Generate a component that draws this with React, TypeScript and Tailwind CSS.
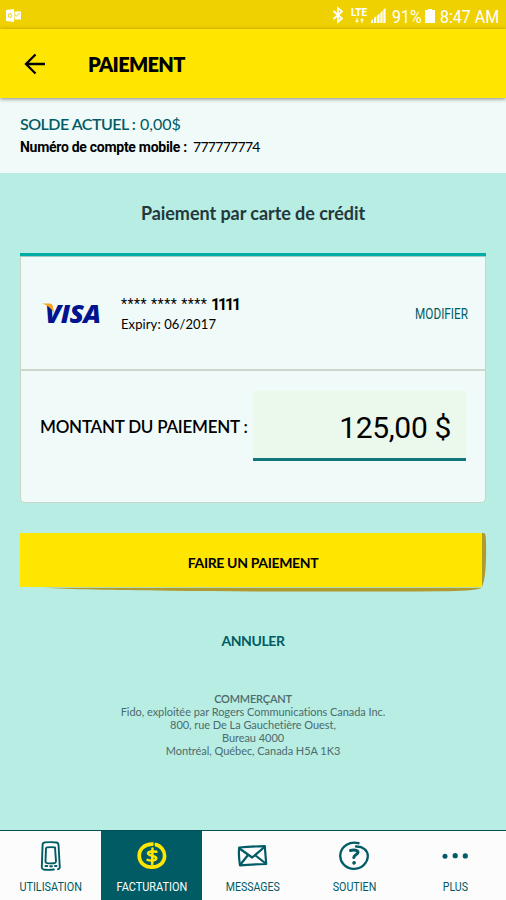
import type { ReactNode } from 'react';

type Tab = {
  label: string;
  labelClass: string;
  icon: ReactNode;
  active?: boolean;
};

function BluetoothIcon() {
  return (
    <svg className="h-[18px] w-[12px]" viewBox="0 0 12 18" fill="none" stroke="currentColor" strokeWidth="1.7">
      <path d="M1.5 5 10 12.5 6 16V2l4 3.5L1.5 13" />
    </svg>
  );
}

function SignalIcon() {
  return (
    <svg className="h-[15px] w-[15px]" viewBox="0 0 15 15" fill="currentColor">
      <path d="M0 15v-2l2-2v4zM3 15v-5l2.300-2v7zM6.200 15V7.500l2.300-2V15zM9.300 15V4.800l2.300-2V15zM12.300 15V1.800l2.300-1.800v15z" />
    </svg>
  );
}

function StatusBar() {
  return (
    <div className="flex h-[29px] items-start bg-[#efd101] text-white">
      <svg className="mt-[9px] ml-[6px] h-[13px] w-[15px]" viewBox="0 0 15 13">
        <path d="M0 1 8 0v13l-8-1z" fill="#fff" />
        <path d="M8.500 2.500H15v8H8.500z" fill="#fff" />
        <ellipse cx="3.900" cy="6.500" rx="1.500" ry="2" fill="none" stroke="#efd101" />
        <path d="m9 6 1.500 1L14 4" fill="none" stroke="#efd101" />
      </svg>
      <div className="mt-[6px] ml-[311px]">
        <BluetoothIcon />
      </div>
      <div className="mt-[8px] ml-[7px] flex w-[16px] flex-col items-center">
        <span className="text-[10px] leading-[9px] font-extrabold">LTE</span>
        <svg className="mt-px h-[5px] w-[9px]" viewBox="0 0 9 5" fill="currentColor">
          <path d="M1.500 0h1v2.500H4L2 5 0 2.500h1.500zM6.500 5h1V2.500H9L7 0 5 2.500h1.500z" />
        </svg>
      </div>
      <div className="mt-[8px] ml-[4px]">
        <SignalIcon />
      </div>
      <span className="mt-[6px] ml-[6px] w-[29px] origin-left scale-x-[0.840] text-[19px] leading-[21px] whitespace-nowrap">91%</span>
      <svg className="mt-[9px] ml-[4px] h-[14px] w-[10px]" viewBox="0 0 10 14" fill="currentColor">
        <path d="M3 0h4v1H3zM0 1h10v13H0z" />
      </svg>
      <span className="mt-[6px] ml-[5px] w-[60px] shrink-0 origin-left scale-x-[0.840] text-[19px] leading-[21px] whitespace-nowrap">8:47 AM</span>
    </div>
  );
}

function Header() {
  return (
    <header className="relative flex h-[69px] items-center bg-[#ffe600] shadow-[0_1px_4px_rgba(0,0,0,0.45)]">
      <svg className="ml-[24px] h-[22px] w-[22px]" viewBox="0 0 22 22" fill="none" stroke="#000" strokeWidth="2.300">
        <path d="M21 11H2M11.500 1.500 2 11l9.500 9.500" />
      </svg>
      <h1 className="ml-[42px] font-[Lato] text-[20px] leading-[24px] font-extrabold tracking-[-0.650px]">PAIEMENT</h1>
    </header>
  );
}

function VisaLogo() {
  return (
    <div className="relative h-[20px] w-[58px] text-[#00148f]">
      <span className="absolute top-[-4px] left-[3px] origin-left scale-x-[1.050] font-['Open_Sans'] text-[25px] leading-[28px] font-extrabold tracking-[-0.500px] italic">
        VISA
      </span>
      <svg className="absolute top-0 left-0 h-[12px] w-[13px]" viewBox="0 0 13 12">
        <path d="M0 .5h7.500c2 0 2.800.8 3.200 2.500l1.500 7C10 6.500 6.500 2.500 0 .5z" fill="#f9a51a" />
      </svg>
    </div>
  );
}

function PhoneIcon() {
  return (
    <svg className="h-[30px] w-[22px]" viewBox="0 0 22 30" fill="none" stroke="currentColor" strokeWidth="1.900" strokeLinecap="round" strokeLinejoin="round">
      <path d="M14 28.500c-3.500.4-7 .5-10.500 0-1.200-.2-1.700-1-1.700-2.200L2.600 3.500C2.700 2 3.500 1.600 5 1.400 9 1 13 1 16.500 1.500c1.500.2 1.900 1 2 2.500l1.300 22.200c0 1.300-.6 1.900-1.800 2.100" />
      <path d="M7 6.400c2.800-.4 5.500-.4 8 0l1 14.100c-.1 1.200-.6 1.600-1.800 1.700-2.500.2-5 .2-7.200-.1-1-.1-1.500-.7-1.500-1.700L6 7.500c0-.6.400-1 1-1.100z" />
      <path d="M5.500 25h1.800M10.200 25.300h1.800M15 25h1.500" />
    </svg>
  );
}

function DollarIcon() {
  return (
    <svg className="h-[30px] w-[32px]" viewBox="0 0 32 30" fill="none" stroke="currentColor" strokeLinecap="round" strokeLinejoin="round">
      <path d="M17.500 3.200C8.500 2.500 3 8.500 3.200 15.200c.2 6.400 5.500 11 12.500 11 7.300 0 12.800-4.500 12.900-11.300.1-5.500-3.700-10.200-9.400-11.500" strokeWidth="3.700" strokeLinecap="butt" />
      <path d="M19.700 3.300c1.700.3 3.200 1 4.600 2.200" strokeWidth="2.800" />
      <path d="M20.400 10.800c-3.200-1-8.200-.6-8.400 1.600-.2 2.300 8.600 2.500 8.300 5-.2 2.300-6 2.700-8.800 1.500M16.500 7.500l-.3 15.500" strokeWidth="2.500" />
    </svg>
  );
}

function EnvelopeIcon() {
  return (
    <svg className="h-[22px] w-[31px]" viewBox="0 0 31 22" fill="none" stroke="currentColor" strokeWidth="2.200" strokeLinecap="round" strokeLinejoin="round">
      <path d="M2.200 2.500c8-.8 17-1.200 25.600-1.300L29.200 19c-8.500.2-17 .5-26.200 1.300C2 14.500 1.500 9 2.200 2.500z" />
      <path d="m2.500 3.500 12.700 9L27.500 2M3.500 19.500 11 10M18.500 10.500l10.200 8" />
    </svg>
  );
}

function HelpIcon() {
  return (
    <svg className="h-[30px] w-[32px]" viewBox="0 0 32 30" fill="none" stroke="currentColor" strokeLinecap="round" strokeLinejoin="round">
      <path d="M20.500 2.200C12-.2 3.500 5.200 2.400 13c-1 7.500 4.600 14.500 12.500 14.800 8.200.4 14.800-5.500 14.900-12.700C29.900 9.500 25 5.200 18 5.500" strokeWidth="2.300" />
      <path d="M12.500 9.500c3-.9 7.500-.5 7.500 1.800 0 2.300-4 2.200-4.200 5.300" strokeWidth="3" />
      <path d="m16.200 21.800-.2.100" strokeWidth="3.500" />
    </svg>
  );
}

function MoreIcon() {
  return (
    <svg className="h-[6px] w-[27px]" viewBox="0 0 27 6" fill="currentColor">
      <circle cx="3" cy="3.300" r="2.500" />
      <circle cx="13.200" cy="2.700" r="2.600" />
      <circle cx="23.300" cy="2.900" r="2.600" />
    </svg>
  );
}

const tabs: Tab[] = [
  { label: 'UTILISATION', labelClass: 'scale-x-[0.900]', icon: <PhoneIcon /> },
  { label: 'FACTURATION', labelClass: 'scale-x-[0.910]', icon: <DollarIcon />, active: true },
  { label: 'MESSAGES', labelClass: 'scale-x-[0.880]', icon: <EnvelopeIcon /> },
  { label: 'SOUTIEN', labelClass: 'scale-x-[0.890]', icon: <HelpIcon /> },
  { label: 'PLUS', labelClass: 'scale-x-[0.880]', icon: <MoreIcon /> },
];

function TabBar() {
  return (
    <nav className="grid h-[70px] grid-cols-5 border-t border-[#00505a] bg-[#fcfcfc] text-[#005b64]">
      {tabs.map((tab) => (
        <div key={tab.label} className={tab.active ? 'flex flex-col items-center bg-[#005b64] text-[#ffe600]' : 'flex flex-col items-center'}>
          <div className="mt-[10px] flex h-[30px] items-center justify-center">{tab.icon}</div>
          <span className={`mt-[8px] text-[12px] leading-[16px] whitespace-nowrap ${tab.labelClass} ${tab.active ? 'text-white' : ''}`}>
            {tab.label}
          </span>
        </div>
      ))}
    </nav>
  );
}

export default function App() {
  return (
    <div className="flex h-[900px] w-[506px] flex-col overflow-hidden bg-[#b7ede3] font-[Roboto] text-black">
      <StatusBar />
      <Header />

      {/* Balance */}
      <section className="h-[75px] bg-[#f0faf9] px-[20px] pt-[15px]">
        <p className="flex font-[Lato] text-[16px] leading-[21px] text-[#005b64]">
          <span className="w-[120px] font-semibold tracking-[-0.500px]">SOLDE ACTUEL :</span>
          <span>0,00$</span>
        </p>
        <p className="mt-[4px] flex text-[14px] leading-[18px]">
          <span className="w-[173px] font-bold tracking-[-0.280px] whitespace-nowrap">Numéro de compte mobile :</span>
          <span className="font-[Lato] tracking-[-0.700px]">777777774</span>
        </p>
      </section>

      <main className="flex flex-1 flex-col px-[20px]">
        <h2 className="mt-[28px] text-center font-[Lato] text-[18px] leading-[24px] font-bold tracking-[-0.050px] text-[#24383b]">Paiement par carte de crédit</h2>

        {/* Card */}
        <div className="mt-[28px] h-[250px] rounded-b-[5px] border border-t-0 border-[#c7d5c6] bg-[#f0faf9]">
          <div className="-mx-px h-[4px] border-b border-[#a8c9bd] bg-[#00aca6]" />
          <div className="flex h-[114px] items-center border-b-2 border-[#ccd8cb] pr-[17px] pl-[21px]">
            <VisaLogo />
            <div className="ml-[21px] flex-1">
              <p className="flex h-[21px] items-start leading-[21px]">
                <span className="w-[90px] text-[14px] tracking-[0.500px] whitespace-nowrap">**** **** ****</span>
                <span className="text-[16px] font-bold tracking-[-2.200px]">1111</span>
              </p>
              <p className="font-[Lato] text-[13px] leading-[18px] tracking-[0.100px]">Expiry: 06/2017</p>
            </div>
            <span className="mt-[2px] origin-right scale-x-[0.840] text-[14px] leading-[16px] text-[#005b64]">MODIFIER</span>
          </div>
          <div className="flex pt-[20px] pr-[19px] pl-[19px]">
            <span className="w-[213px] pt-[25px] font-[Lato] text-[17px] leading-[22px] font-semibold tracking-[-0.250px] whitespace-nowrap">MONTANT DU PAIEMENT :</span>
            <div className="h-[70px] w-[213px] border-b-[3px] border-[#11777b] bg-[#ebf9ec] pt-[19px] pr-[15px] text-right text-[30px] leading-[36px] tracking-[-0.350px]">
              125,00 $
            </div>
          </div>
        </div>

        {/* Submit button with its hand-cut shadow */}
        <button className="relative mt-[30px] h-[54px] w-[462px] bg-[#ffe600] pt-[4px] font-[Lato] text-[14px] font-bold tracking-[-0.350px]">
          <svg className="absolute top-0 left-0 h-[60px] w-[467px]" viewBox="0 0 467 60" fill="#b09a2b">
            <path d="M462 0h2c1.500.5 2 4 2 9 .3 12 .1 23-1 32-.8 6-1.800 10-3 13zM24 54.800h438c-6 2.700-20 3.400-42 3.500-90 .6-190 .3-270-.6C90 57 50 56.500 24 54.800z" />
          </svg>
          <span className="ml-[4px]">FAIRE UN PAIEMENT</span>
        </button>

        <p className="mt-[44px] text-center font-[Lato] text-[14px] leading-[20px] font-bold tracking-[-0.400px] text-[#005b64]">ANNULER</p>

        <div className="mt-[41px] text-center font-[Lato] text-[11px] leading-[13px] tracking-[-0.050px] text-[#4e6b6d]">
          <p className="font-semibold tracking-[-0.200px]">COMMERÇANT</p>
          <p>Fido, exploitée par Rogers Communications Canada Inc.</p>
          <p>800, rue De La Gauchetière Ouest,</p>
          <p>Bureau 4000</p>
          <p>Montréal, Québec, Canada H5A 1K3</p>
        </div>
      </main>

      <TabBar />
    </div>
  );
}
